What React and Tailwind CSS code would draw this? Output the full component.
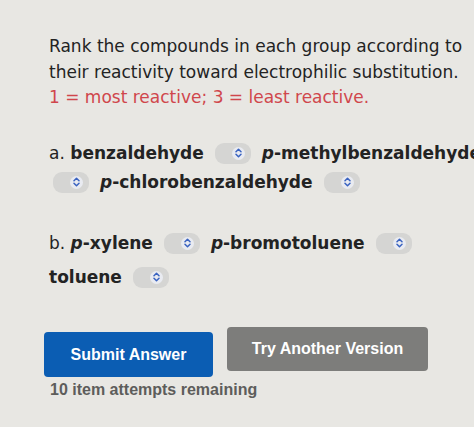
import React from 'react';

const Select = () => (
  <span className="inline-flex h-[21px] w-[36px] items-center justify-end rounded-[9px] bg-[#d5d5d3] pr-[6px]">
    <span className="flex h-[13px] w-[13px] items-center justify-center rounded-full bg-[#e9ebf1]">
      <svg width="7" height="10" viewBox="0 0 7 10" fill="none">
        <path d="M1 3.8 L3.5 1.3 L6 3.8 M1 6.2 L3.5 8.7 L6 6.2" stroke="#3a63c0" strokeWidth="1.5" strokeLinecap="round" strokeLinejoin="round" />
      </svg>
    </span>
  </span>
);

const P = () => <i className="font-bold">p</i>;

const App = () => {
  return (
    <div className="h-[427px] w-[474px] overflow-hidden bg-[#e8e7e3]">
      <div className="w-[520px] pl-[49px] pt-[34px] text-[17px] text-[#232323]" style={{ fontFamily: '"DejaVu Sans", Verdana, sans-serif' }}>
        <p className="leading-[25.5px]">
          Rank the compounds in each group according to
          <br />
          their reactivity toward electrophilic substitution.
          <br />
          <span className="text-[#d0464c]">1 = most reactive; 3 = least reactive.</span>
        </p>

        <div className="mt-[30px] flex flex-col gap-[3.5px]">
          <div className="flex items-center gap-[11px]">
            <span>a. <b>benzaldehyde</b></span>
            <Select />
            <b><P />-methylbenzaldehyde</b>
          </div>
          <div className="flex items-center gap-[11px] pl-[4px]">
            <Select />
            <b><P />-chlorobenzaldehyde</b>
            <Select />
          </div>
        </div>

        <div className="mt-[35.5px] flex flex-col gap-[8.5px]">
          <div className="flex items-center gap-[11px]">
            <span>b. <b><P />-xylene</b></span>
            <Select />
            <b><P />-bromotoluene</b>
            <Select />
          </div>
          <div className="flex items-center gap-[11px]">
            <b>toluene</b>
            <Select />
          </div>
        </div>
      </div>

      <div className="pl-[44px] pt-[37px]" style={{ fontFamily: '"Liberation Sans", Arial, sans-serif' }}>
        <div className="flex items-start gap-[14px]">
          <button className="mt-[5px] h-[45px] w-[169px] rounded-[4px] bg-[#0b5db3] text-[16px] font-bold text-white">
            Submit Answer
          </button>
          <button className="h-[44px] w-[201px] rounded-[4px] bg-[#7d7d7b] text-[16px] font-bold text-white">
            Try Another Version
          </button>
        </div>
        <p className="mt-[3px] pl-[6px] text-[16px] font-bold leading-[20px] text-[#5d5d5b]">10 item attempts remaining</p>
      </div>
    </div>
  );
};

export default App;
